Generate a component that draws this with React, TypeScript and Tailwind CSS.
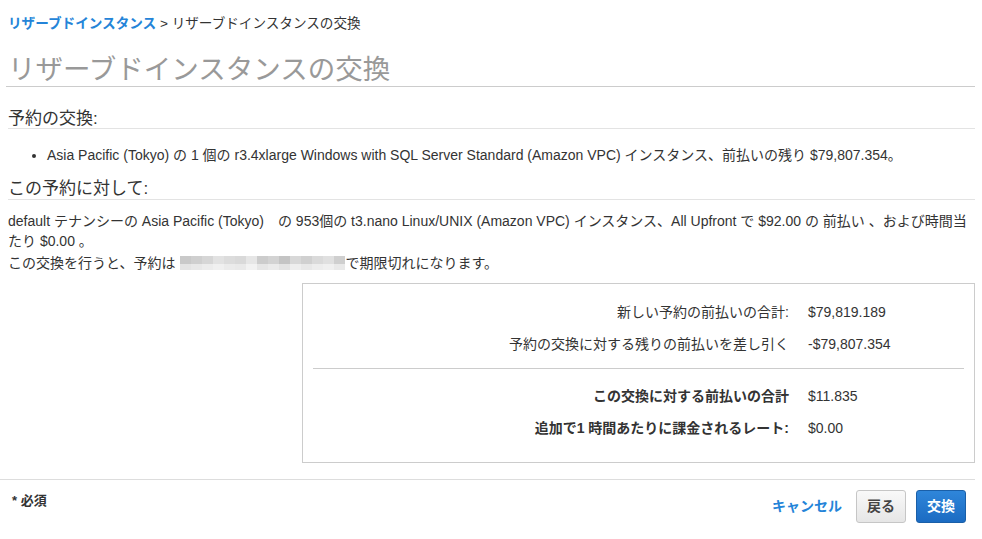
import React from "react";

const font = { fontFamily: '"Liberation Sans", "Noto Sans CJK JP", sans-serif' };

const blurTop = ["#c9c9c9","#cfcfcf","#d6d6d6","#e2e2e2","#dcdcdc","#d9d9d9","#e6e6e6","#cccccc","#d3d3d3","#c4c4c4","#d8d8d8","#d0d0d0","#dadada","#e0e0e0","#cfcfcf"];
const blurBot = ["#e4e4e4","#e8e8e8","#ececec","#f0f0f0","#ebebeb","#e9e9e9","#f2f2f2","#e6e6e6","#ebebeb","#e3e3e3","#eeeeee","#e8e8e8","#ededed","#f0f0f0","#e9e9e9"];

export default function App() {
  return (
    <div className="w-[982px] h-[539px] bg-white text-[#333] overflow-hidden" style={font}>
      <div className="pl-2 pr-[7px] pt-[15px]">
        <div className="text-[13.6px] leading-[18px]">
          <span className="text-[#2484d8] font-bold">リザーブドインスタンス</span>
          <span className="text-[#333]"> &gt; リザーブドインスタンスの交換</span>
        </div>
        <h1 className="mt-[25px] text-[27.5px] leading-[24px] text-[#999] pb-[4px] border-b border-[#cccccc] -ml-[2px] pl-[2px]">
          リザーブドインスタンスの交換
        </h1>
        <h2 className="mt-[23px] text-[17px] leading-[18px] text-[#333] pb-0 border-b border-[#e3e3e3]">予約の交換:</h2>
        <ul className="mt-[16px] pl-[39px] text-[14px] leading-[20px] list-disc">
          <li>Asia Pacific (Tokyo) の 1 個の r3.4xlarge Windows with SQL Server Standard (Amazon VPC) インスタンス、前払いの残り $79,807.354。</li>
        </ul>
        <h2 className="mt-[15px] text-[17px] leading-[18px] text-[#333] pb-[1px] border-b border-[#e3e3e3]">この予約に対して:</h2>
        <p className="mt-[11px] w-[961px] text-[14px] leading-[20px]">
          default テナンシーの Asia Pacific (Tokyo)　の 953個の t3.nano Linux/UNIX (Amazon VPC) インスタンス、All Upfront で $92.00 の 前払い 、および時間当たり $0.00 。
        </p>
        <p className="mt-[2px] text-[14px] leading-[20px] flex items-center">
          <span>この交換を行うと、予約は</span>
          <span className="inline-flex flex-col ml-[5px] w-[165px] h-[14px]">
            <span className="flex h-[8px]">
              {blurTop.map((c, i) => (
                <span key={i} className="flex-1 h-full" style={{ background: c }} />
              ))}
            </span>
            <span className="flex h-[6px]">
              {blurBot.map((c, i) => (
                <span key={i} className="flex-1 h-full" style={{ background: c }} />
              ))}
            </span>
          </span>
          <span>で期限切れになります。</span>
        </p>
        <div className="flex justify-end mt-[10px]">
          <div className="w-[673px] h-[180px] border border-[#cccccc] px-[10px] pt-[19px] text-[14px]">
            <div className="grid grid-cols-[476px_1fr] gap-x-[19px] gap-y-[14px] leading-[18px]">
              <div className="text-right">新しい予約の前払いの合計:</div>
              <div>$79,819.189</div>
              <div className="text-right">予約の交換に対する残りの前払いを差し引く</div>
              <div>-$79,807.354</div>
            </div>
            <div className="border-t border-[#cccccc] mt-[15px] mb-[18px]" />
            <div className="grid grid-cols-[476px_1fr] gap-x-[19px] gap-y-[14px] leading-[18px]">
              <div className="text-right font-bold">この交換に対する前払いの合計</div>
              <div>$11.835</div>
              <div className="text-right font-bold">追加で1 時間あたりに課金されるレート:</div>
              <div>$0.00</div>
            </div>
          </div>
        </div>
      </div>
      <div className="mt-[16px] mr-[7px] border-t border-[#dddddd] flex justify-between items-start">
        <div className="pl-[12px] pt-[12px] text-[13px] font-bold text-[#333] leading-[18px]">* 必須</div>
        <div className="flex items-center pt-[10px] pr-[9px]">
          <button className="text-[#2484d8] font-bold text-[14px] mr-[14px]">キャンセル</button>
          <button className="h-[33px] w-[50px] rounded-[3px] border border-[#c6c6c6] bg-gradient-to-b from-[#f9f9f9] to-[#e6e6e6] text-[#444] font-bold text-[14px] mr-[10px]">戻る</button>
          <button className="h-[33px] w-[50px] rounded-[3px] border border-[#1a5fa8] bg-gradient-to-b from-[#2f86da] to-[#1b6bc2] text-white font-bold text-[14px]">交換</button>
        </div>
      </div>
    </div>
  );
}
